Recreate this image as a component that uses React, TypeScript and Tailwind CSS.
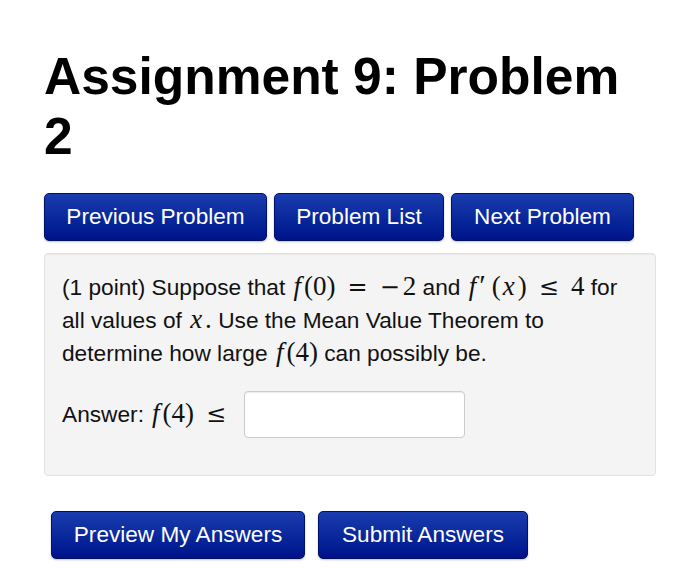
import React from 'react';

const btn =
  'h-[48px] rounded-[5px] border border-[#001066] bg-gradient-to-b from-[#1a3cae] to-[#00118a] text-[22.6px] text-white shadow-[0_1px_2px_rgba(0,0,0,0.25)]';

function M({ children }: { children: React.ReactNode }) {
  return <span className="whitespace-nowrap font-['Liberation_Serif',serif] text-[27px] leading-[27px]">{children}</span>;
}

// italic variable with a little room, like the math renderer gives it
function I({ children }: { children: React.ReactNode }) {
  return <span className="ml-[2px] mr-[3px] italic">{children}</span>;
}

function Op({ children }: { children: React.ReactNode }) {
  return <span className="mx-[12px] font-['DejaVu_Serif',serif] text-[24px]">{children}</span>;
}

export default function App() {
  return (
    <div className="min-h-[571px] bg-white px-[44px] pt-[46px] font-['Liberation_Sans',Arial,sans-serif] text-[#111]">
      <h1 className="w-[600px] text-[51.5px] font-bold leading-[60px] text-black">
        Assignment 9: Problem 2
      </h1>

      {/* navigation */}
      <div className="mt-[27px] flex gap-[7px]">
        <button className={`${btn} w-[223px]`}>Previous Problem</button>
        <button className={`${btn} w-[170px]`}>Problem List</button>
        <button className={`${btn} w-[183px]`}>Next Problem</button>
      </div>

      {/* problem */}
      <div className="mt-[12px] w-[612px] rounded-[4px] border border-[#e2e2e2] bg-[#f4f4f4] pb-[37px] pl-[17px] pr-[22px] pt-[17px] shadow-[inset_0_1px_1px_rgba(0,0,0,0.04)]">
        <p className="text-[22.7px] leading-[33px]">
          (1 point) Suppose that{' '}
          <M>
            <I>f</I>(0)<Op>=</Op>
            <span className="mr-[3px] font-['DejaVu_Serif',serif] text-[24px]">−</span>2
          </M>{' '}
          and{' '}
          <M>
            <I>f</I>
            <span className="mr-[6px] text-[30px]">′</span>(<I>x</I>)<Op>≤</Op>4
          </M>{' '}
          for all values of{' '}
          <M>
            <I>x</I>.
          </M>{' '}
          Use the Mean Value Theorem to determine how large{' '}
          <M>
            <I>f</I>(4)
          </M>{' '}
          can possibly be.
        </p>

        <div className="mt-[21px] flex items-center text-[22.7px]">
          <span>Answer:</span>
          <span className="ml-[6px]">
            <M>
              <I>f</I>(4)<Op>≤</Op>
            </M>
          </span>
          <input
            type="text"
            className="ml-[6px] h-[47px] w-[221px] rounded-[4px] border border-[#cccccc] bg-white shadow-[inset_0_1px_1px_rgba(0,0,0,0.075)]"
          />
        </div>
      </div>

      {/* submit */}
      <div className="mt-[35px] flex gap-[13px] pl-[7px]">
        <button className={`${btn} w-[254px]`}>Preview My Answers</button>
        <button className={`${btn} w-[210px]`}>Submit Answers</button>
      </div>
    </div>
  );
}
